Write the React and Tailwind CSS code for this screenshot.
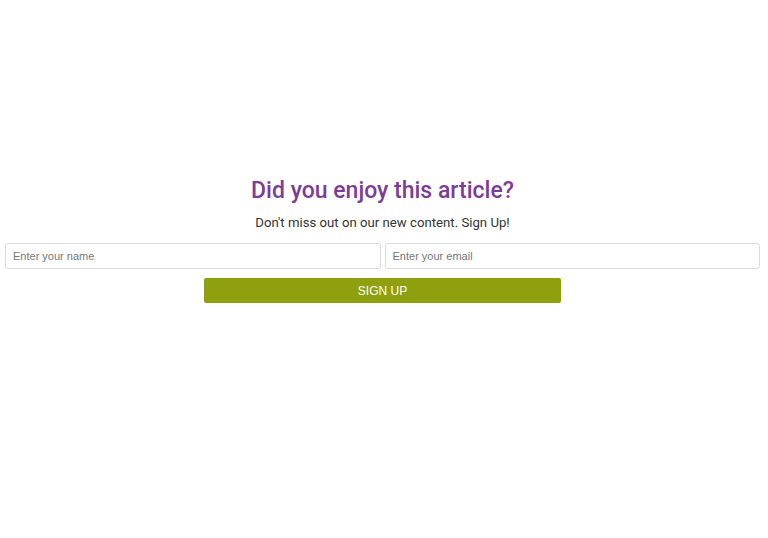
export default function App() {
  return (
    <div className="bg-white min-h-[538px] w-full font-['Roboto',sans-serif]">
      <div className="pt-[174px] pl-[5px] pr-[8px]">
        <h2 className="text-center text-[23px] font-medium text-[#7d3c98] leading-[34px]">
          Did you enjoy this article?
        </h2>
        <p className="text-center text-[13.2px] text-[#333333] mt-[5px] leading-[20px]">
          Don't miss out on our new content. Sign Up!
        </p>
        <form className="mt-[10px]" onSubmit={(e) => e.preventDefault()}>
          <div className="flex gap-[4px]">
            <input type="text" placeholder="Enter your name"
              className="flex-1 min-w-0 h-[26px] border border-[#dcdcdc] rounded-[3px] px-[7px] text-[11px] font-['Liberation_Sans',Arial,sans-serif] placeholder:text-[#777777] outline-none" />
            <input type="email" placeholder="Enter your email"
              className="flex-1 min-w-0 h-[26px] border border-[#dcdcdc] rounded-[3px] px-[7px] text-[11px] font-['Liberation_Sans',Arial,sans-serif] placeholder:text-[#777777] outline-none" />
          </div>
          <div className="flex justify-center mt-[9px]">
            <button type="submit"
              className="w-[357px] h-[25px] bg-[#8fa00e] rounded-[2px] text-white text-[12px] font-['Liberation_Sans',Arial,sans-serif] uppercase">
              Sign Up
            </button>
          </div>
        </form>
      </div>
    </div>
  );
}
